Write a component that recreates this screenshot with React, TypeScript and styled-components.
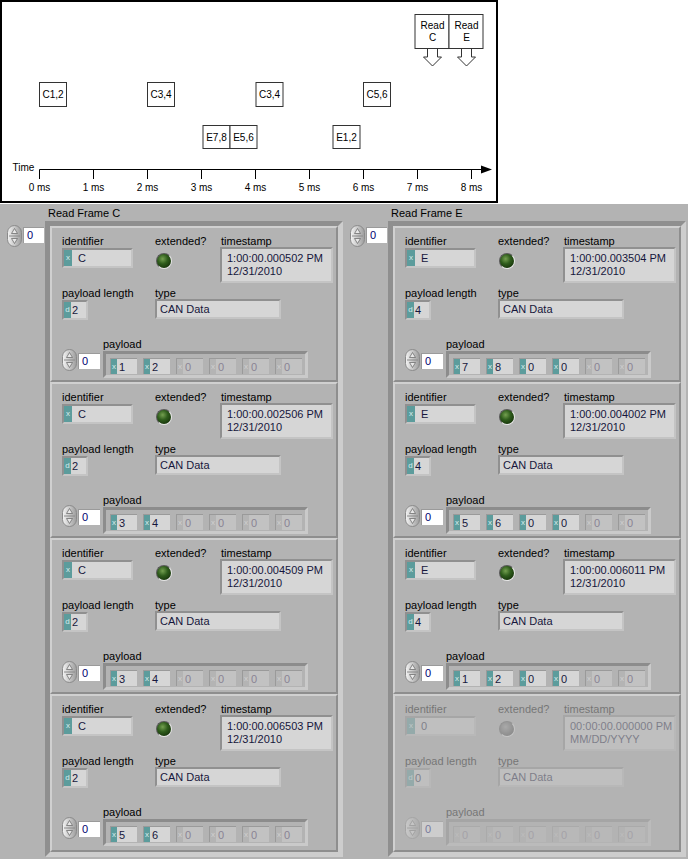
import React from "react";
import styled, { createGlobalStyle } from "styled-components";

const GlobalStyle = createGlobalStyle`
  body {
    margin: 0;
    background: #fff;
    font-family: "Liberation Sans", Arial, sans-serif;
  }
`;

const Page = styled.div`
  display: flex;
  flex-direction: column;
  align-items: flex-start;
`;

const DiagramBox = styled.div`
  width: 494px;
  height: 199px;
  border: 2px solid #000;
  background: #fff;
  margin-bottom: 1px;
  svg {
    display: block;
  }
`;

const Panel = styled.div`
  box-sizing: border-box;
  width: 688px;
  height: 655px;
  background: #b3b3b3;
  display: flex;
  gap: 7px;
  padding: 3px 0 0 7px;
`;

const ArrayControl = styled.div`
  display: grid;
  grid-template-columns: 15px 21px 298px;
  grid-template-rows: 12px 636px;
  column-gap: 1px;
  row-gap: 2px;
  align-items: start;
`;

const ArrayLabel = styled.div`
  grid-column: 3;
  grid-row: 1;
  padding-left: 3px;
  font-size: 11px;
  line-height: 12px;
  color: #000;
  white-space: nowrap;
`;

const SpinCell = styled.div<{ $top: number }>`
  grid-row: 2;
  margin-top: ${(p) => p.$top}px;
  display: flex;
`;

const IndexBox = styled.div<{ $top?: number; $w?: number }>`
  box-sizing: border-box;
  grid-row: 2;
  margin-top: ${(p) => p.$top ?? 0}px;
  width: ${(p) => p.$w ?? 21}px;
  height: 16px;
  background: #fff;
  border-top: 1px solid #9a9a9a;
  border-left: 1px solid #9a9a9a;
  padding-left: 3px;
  font-size: 11px;
  line-height: 15px;
  color: #000070;
`;

const Frame = styled.div`
  grid-column: 3;
  grid-row: 2;
  box-sizing: border-box;
  height: 636px;
  border: 5px solid;
  border-color: #8f8f8f #cdcdcd #cdcdcd #8f8f8f;
  display: flex;
  flex-direction: column;
`;

const Element = styled.div`
  box-sizing: border-box;
  height: 156px;
  border: 2px solid;
  border-color: #d0d0d0 #8e8e8e #8e8e8e #d0d0d0;
  padding: 7px 0 0 10px;
  &:last-child {
    height: 158px;
  }
`;

const Content = styled.div<{ $off?: boolean }>`
  opacity: ${(p) => (p.$off ? 0.35 : 1)};
`;

const TopRow = styled.div`
  display: grid;
  grid-template-columns: 93px 65px 114px;
`;

const MidRow = styled.div`
  display: grid;
  grid-template-columns: 93px 130px;
  margin-top: 4px;
`;

const BottomRow = styled.div`
  display: flex;
  margin-top: 18px;
`;

const Field = styled.div`
  display: flex;
  flex-direction: column;
  align-items: flex-start;
`;

const Label = styled.div<{ $indent?: number }>`
  font-size: 11px;
  line-height: 12px;
  height: 12px;
  padding-left: ${(p) => p.$indent ?? 0}px;
  color: #000;
  white-space: nowrap;
`;

const Sunken = styled.div<{ $w: number; $h: number; $gap?: number }>`
  box-sizing: border-box;
  width: ${(p) => p.$w}px;
  height: ${(p) => p.$h}px;
  margin-top: ${(p) => p.$gap ?? 0}px;
  background: #d6d6d6;
  border: 2px solid;
  border-color: #909090 #c4c4c4 #c4c4c4 #909090;
  display: flex;
  font-size: 11px;
  color: #16163c;
`;

const Radix = styled.span<{ $w?: number }>`
  width: ${(p) => p.$w ?? 8}px;
  background: #5c9c9c;
  color: #d7ecec;
  font-size: 8px;
  line-height: 15px;
  text-align: center;
  flex-shrink: 0;
`;

const Value = styled.span<{ $pad?: number }>`
  padding-left: ${(p) => p.$pad ?? 5}px;
  line-height: 16px;
  white-space: nowrap;
`;

const StampText = styled.div`
  padding: 3px 0 0 5px;
  line-height: 13px;
  white-space: nowrap;
`;

const Led = styled.div<{ $off?: boolean }>`
  box-sizing: border-box;
  width: 16px;
  height: 16px;
  margin: 6px 0 0 1px;
  border-radius: 50%;
  border: 1px solid;
  border-color: #5a5a5a #e6e6e6 #e6e6e6 #5a5a5a;
  background: ${(p) =>
    p.$off
      ? "radial-gradient(circle at 40% 35%, #9a9a9a 0, #555 60%, #333 100%)"
      : "radial-gradient(circle at 40% 35%, #74a050 0, #2f5d1c 40%, #132e08 85%)"};
`;

const IndexGroup = styled.div`
  display: flex;
  gap: 1px;
  width: 41px;
  margin-top: 11px;
`;

const PayloadFrame = styled.div`
  box-sizing: border-box;
  width: 205px;
  height: 27px;
  margin-top: 1px;
  border: 3px solid;
  border-color: #8c8c8c #cacaca #cacaca #8c8c8c;
  padding: 4px 3px 0 4px;
  display: flex;
  gap: 6px;
`;

const Item = styled.div<{ $off?: boolean }>`
  box-sizing: border-box;
  width: 27px;
  height: 16px;
  background: ${(p) => (p.$off ? "#c2c2c2" : "#d6d6d6")};
  border-left: 1px solid #9a9a9a;
  border-top: 1px solid #9a9a9a;
  display: flex;
  font-size: 11px;
  color: ${(p) => (p.$off ? "#8a8394" : "#16163c")};
  span:first-child {
    background: ${(p) => (p.$off ? "#b4b4b4" : "#5c9c9c")};
    color: ${(p) => (p.$off ? "#d0d0d0" : "#d7ecec")};
  }
`;

const Spinner = () => (
  <svg width="15" height="22" viewBox="0 0 15 22">
    <defs>
      <linearGradient id="spin" x1="0" x2="1" y1="0" y2="0">
        <stop offset="0" stopColor="#f4f4f4" />
        <stop offset="1" stopColor="#9c9c9c" />
      </linearGradient>
    </defs>
    <rect x="0.5" y="0.5" width="14" height="21" rx="7" fill="url(#spin)" stroke="#8a8a8a" />
    <line x1="2" y1="11" x2="13" y2="11" stroke="#8a8a8a" />
    <path d="M7.5 3.5 L10.5 8.5 L4.5 8.5 Z" fill="#e8e8e8" stroke="#6e6e6e" strokeWidth="0.8" />
    <path d="M7.5 18.5 L10.5 13.5 L4.5 13.5 Z" fill="#e8e8e8" stroke="#6e6e6e" strokeWidth="0.8" />
  </svg>
);

type Frame = {
  id: string;
  time: string;
  date: string;
  len: number;
  data: number[];
  off?: boolean;
};

const FrameElement = ({ f }: { f: Frame }) => (
  <Element>
    <Content $off={f.off}>
      <TopRow>
        <Field>
          <Label>identifier</Label>
          <Sunken $w={71} $h={20} $gap={1}>
            <Radix>x</Radix>
            <Value $pad={6}>{f.id}</Value>
          </Sunken>
        </Field>
        <Field>
          <Label>extended?</Label>
          <Led $off={f.off} />
        </Field>
        <Field>
          <Label $indent={1}>timestamp</Label>
          <Sunken $w={113} $h={36}>
            <StampText>
              {f.time}
              <br />
              {f.date}
            </StampText>
          </Sunken>
        </Field>
      </TopRow>
      <MidRow>
        <Field>
          <Label>payload length</Label>
          <Sunken $w={26} $h={20} $gap={1}>
            <Radix $w={7}>d</Radix>
            <Value $pad={1}>{f.len}</Value>
          </Sunken>
        </Field>
        <Field>
          <Label>type</Label>
          <Sunken $w={126} $h={20}>
            <Value $pad={3}>CAN Data</Value>
          </Sunken>
        </Field>
      </MidRow>
      <BottomRow>
        <IndexGroup>
          <Spinner />
          <IndexBox $top={4} $w={22}>
            0
          </IndexBox>
        </IndexGroup>
        <Field>
          <Label>payload</Label>
          <PayloadFrame>
            {f.data.map((v, i) => (
              <Item key={i} $off={i >= f.len}>
                <Radix $w={6}>x</Radix>
                <Value $pad={2}>{v}</Value>
              </Item>
            ))}
          </PayloadFrame>
        </Field>
      </BottomRow>
    </Content>
  </Element>
);

const DATE = "12/31/2010";

const framesC: Frame[] = [
  { id: "C", time: "1:00:00.000502 PM", date: DATE, len: 2, data: [1, 2, 0, 0, 0, 0] },
  { id: "C", time: "1:00:00.002506 PM", date: DATE, len: 2, data: [3, 4, 0, 0, 0, 0] },
  { id: "C", time: "1:00:00.004509 PM", date: DATE, len: 2, data: [3, 4, 0, 0, 0, 0] },
  { id: "C", time: "1:00:00.006503 PM", date: DATE, len: 2, data: [5, 6, 0, 0, 0, 0] },
];

const framesE: Frame[] = [
  { id: "E", time: "1:00:00.003504 PM", date: DATE, len: 4, data: [7, 8, 0, 0, 0, 0] },
  { id: "E", time: "1:00:00.004002 PM", date: DATE, len: 4, data: [5, 6, 0, 0, 0, 0] },
  { id: "E", time: "1:00:00.006011 PM", date: DATE, len: 4, data: [1, 2, 0, 0, 0, 0] },
  { id: "0", time: "00:00:00.000000 PM", date: "MM/DD/YYYY", len: 0, data: [0, 0, 0, 0, 0, 0], off: true },
];

const ReadArray = ({ title, frames }: { title: string; frames: Frame[] }) => (
  <ArrayControl>
    <ArrayLabel>{title}</ArrayLabel>
    <SpinCell $top={4}>
      <Spinner />
    </SpinCell>
    <IndexBox $top={6}>0</IndexBox>
    <Frame>
      {frames.map((f, i) => (
        <FrameElement key={i} f={f} />
      ))}
    </Frame>
  </ArrayControl>
);

// timeline drawing, coordinates match the picture
const ticks = [0, 1, 2, 3, 4, 5, 6, 7, 8];
const tickX = (i: number) => 39.5 + 54 * i;

const boxesC = [
  { x: 39.5, t: "C1,2" },
  { x: 147.5, t: "C3,4" },
  { x: 256, t: "C3,4" },
  { x: 363.5, t: "C5,6" },
];
const boxesE = [
  { x: 203, t: "E7,8" },
  { x: 230, t: "E5,6" },
  { x: 333, t: "E1,2" },
];

const ReadTag = ({ x, name }: { x: number; name: string }) => {
  const c = x + 17.5;
  return (
    <g>
      <polygon
        points={`${c - 5},47 ${c - 5},57 ${c - 9},57 ${c},66 ${c + 9},57 ${c + 5},57 ${c + 5},47`}
        fill="#fff"
        stroke="#333"
      />
      <rect x={x} y={14.5} width={34} height={34} fill="#fff" stroke="#333" />
      <text x={c} y={29} textAnchor="middle">Read</text>
      <text x={c} y={41} textAnchor="middle">{name}</text>
    </g>
  );
};

const Timeline = () => (
  <svg width="494" height="199" viewBox="2 2 494 199" fontFamily="Liberation Sans, Arial, sans-serif" fontSize="10" fill="#000">
    <text x="12.5" y="171">Time</text>
    <line x1="39.5" y1="169.5" x2="483" y2="169.5" stroke="#000" />
    <polygon points="481,165.5 492,169.5 481,173.5" fill="#000" />
    {ticks.map((i) => (
      <g key={i}>
        <line x1={tickX(i)} y1="169.5" x2={tickX(i)} y2="179" stroke="#000" />
        <text x={tickX(i)} y="191" textAnchor="middle">
          {i} ms
        </text>
      </g>
    ))}
    {boxesC.map((b, i) => (
      <g key={i}>
        <rect x={b.x} y={82.5} width={27} height={24} fill="#fff" stroke="#333" />
        <text x={b.x + 13.5} y={98} textAnchor="middle">{b.t}</text>
      </g>
    ))}
    {boxesE.map((b, i) => (
      <g key={i}>
        <rect x={b.x} y={125.5} width={27} height={23} fill="#fff" stroke="#333" />
        <text x={b.x + 13.5} y={141} textAnchor="middle">{b.t}</text>
      </g>
    ))}
    <ReadTag x={415} name="C" />
    <ReadTag x={449} name="E" />
  </svg>
);

export default function App() {
  return (
    <Page>
      <GlobalStyle />
      <DiagramBox>
        <Timeline />
      </DiagramBox>
      <Panel>
        <ReadArray title="Read Frame C" frames={framesC} />
        <ReadArray title="Read Frame E" frames={framesE} />
      </Panel>
    </Page>
  );
}
